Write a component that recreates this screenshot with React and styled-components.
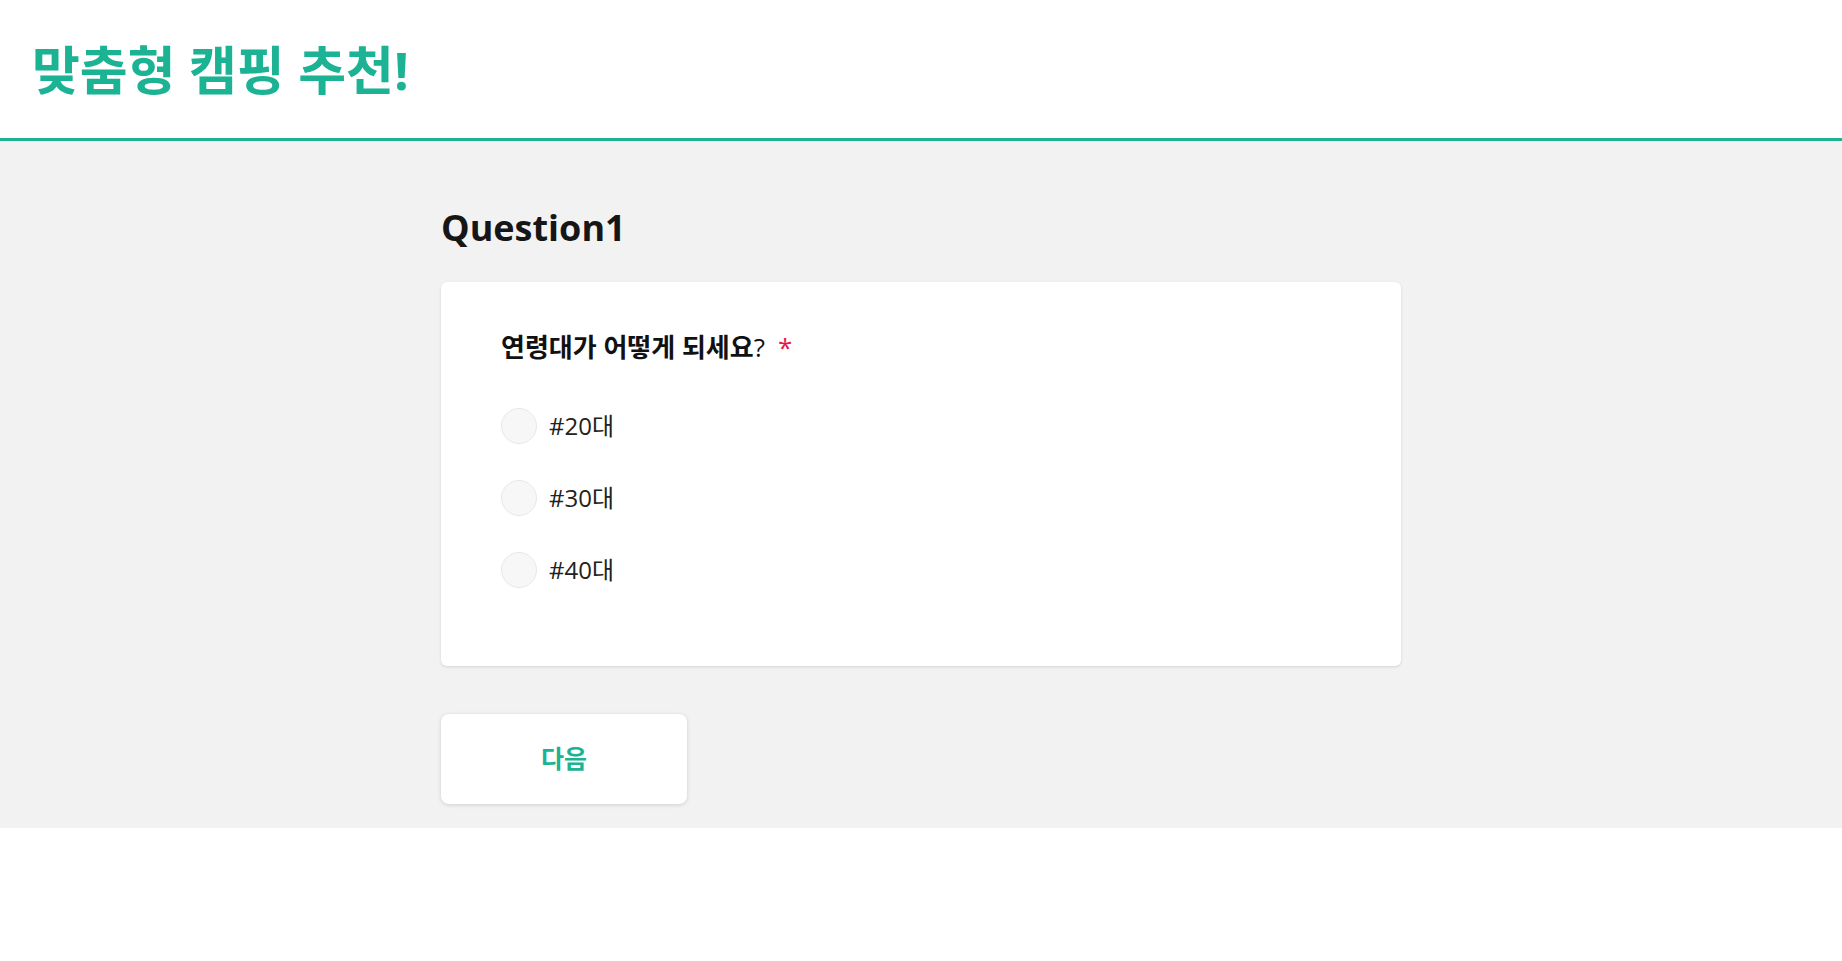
import React, { useState } from "react";
import styled, { createGlobalStyle } from "styled-components";

const GREEN = "#1bb394";

const QUESTION = {
  title: "연령대가 어떻게 되세요",
  options: ["#20대", "#30대", "#40대"],
};

function App() {
  const [picked, setPicked] = useState(null);

  return (
    <>
      <GlobalStyle />
      <Header>
        <Logo>맞춤형 캠핑 추천!</Logo>
      </Header>
      <Main>
        <Column>
          <Heading>Question1</Heading>
          <Card>
            <Ask>
              {QUESTION.title}
              <Mark>?</Mark>
              <Required>*</Required>
            </Ask>
            <Options>
              {QUESTION.options.map((opt, i) => (
                <Option key={opt} onClick={() => setPicked(i)}>
                  <Circle checked={picked === i} />
                  <Label>{opt}</Label>
                </Option>
              ))}
            </Options>
          </Card>
          <NextButton>다음</NextButton>
        </Column>
      </Main>
    </>
  );
}

const GlobalStyle = createGlobalStyle`
  body {
    margin: 0;
    background: #fff;
    font-family: "Open Sans", "Noto Sans CJK KR", sans-serif;
    color: #1a1a1a;
  }
`;

const Header = styled.header`
  display: flex;
  align-items: center;
  height: 141px;
  padding: 2px 32px 0;
  box-sizing: border-box;
  border-bottom: 3px solid ${GREEN};
`;

const Logo = styled.h1`
  margin: 0;
  font-size: 52px;
  font-weight: 700;
  color: ${GREEN};
  line-height: 64px;
`;

const Main = styled.main`
  background: #f2f2f2;
  padding: 63px 0 24px;
`;

const Column = styled.div`
  width: 960px;
  margin: 0 auto;
`;

const Heading = styled.h2`
  margin: 0 0 30px;
  font-size: 36px;
  line-height: 48px;
  font-weight: 700;
  color: #161616;
`;

const Card = styled.section`
  background: #fff;
  border-radius: 6px;
  box-shadow: 0 1px 3px rgba(0, 0, 0, 0.13);
  padding: 48px 60px 78px;
`;

const Ask = styled.p`
  margin: 0;
  font-size: 26px;
  line-height: 34px;
  font-weight: 700;
  color: #111;
`;

const Mark = styled.span`
  font-weight: 400;
`;

const Required = styled.span`
  margin-left: 13px;
  color: #e5164a;
  font-weight: 400;
`;

const Options = styled.div`
  display: flex;
  flex-direction: column;
  gap: 36px;
  margin-top: 44px;
`;

const Option = styled.label`
  display: flex;
  align-items: center;
  height: 36px;
  cursor: pointer;
`;

const Circle = styled.span`
  width: 36px;
  height: 36px;
  box-sizing: border-box;
  border-radius: 50%;
  background: ${(p) => (p.checked ? GREEN : "#f7f7f7")};
  border: 1px solid #e8e8e8;
`;

const Label = styled.span`
  margin-left: 12px;
  padding-bottom: 4px;
  font-size: 24px;
  color: #222;
`;

const NextButton = styled.button`
  display: block;
  margin-top: 48px;
  padding: 0 0 4px;
  width: 246px;
  height: 90px;
  border: none;
  border-radius: 8px;
  background: #fff;
  box-shadow: 0 1px 4px rgba(0, 0, 0, 0.15);
  font-family: inherit;
  font-size: 25px;
  font-weight: 700;
  color: ${GREEN};
  cursor: pointer;
`;

export default App;
